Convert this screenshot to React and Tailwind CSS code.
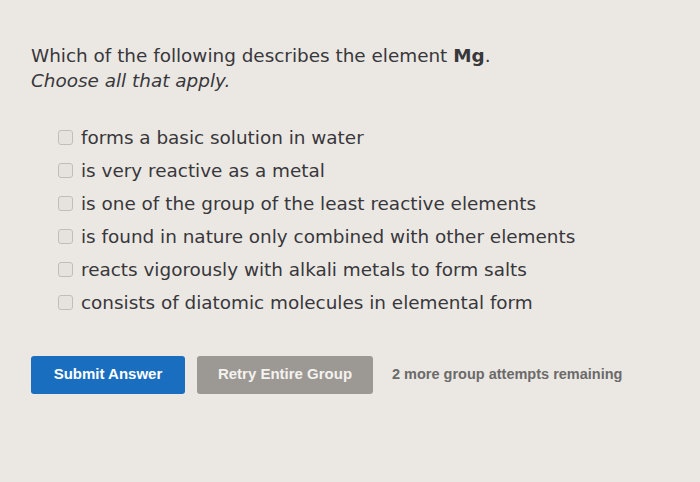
import React from "react";

const options = [
  "forms a basic solution in water",
  "is very reactive as a metal",
  "is one of the group of the least reactive elements",
  "is found in nature only combined with other elements",
  "reacts vigorously with alkali metals to form salts",
  "consists of diatomic molecules in elemental form",
];

export default function App() {
  return (
    <div className="w-[700px] h-[482px] overflow-hidden bg-[#ebe8e3] text-[#38373b] font-['DejaVu_Sans',sans-serif]">
      <div className="pl-[31px] pt-[43px]">
        <p className="text-[18.4px] leading-[25px]">
          Which of the following describes the element <b>Mg</b>.
        </p>
        <p className="text-[18.4px] leading-[25px] italic">Choose all that apply.</p>

        <div className="mt-[32.5px] pl-[27px] flex flex-col gap-[9px]">
          {options.map((o) => (
            <label key={o} className="flex items-center gap-[8px] text-[18.4px] leading-[24px]">
              <span className="w-[15px] h-[15px] rounded-[3px] border-[1.5px] border-[#c2beb7] bg-[#e6e3de] shrink-0" />
              {o}
            </label>
          ))}
        </div>

        <div className="mt-[41px] flex items-center gap-[12px] font-['Liberation_Sans',Arial,sans-serif]">
          <button className="w-[154px] h-[38px] rounded-[3px] bg-[#1a6ec0] text-white font-bold text-[15px]">
            Submit Answer
          </button>
          <button className="w-[176px] h-[38px] rounded-[3px] bg-[#9c9894] text-[#f4f2ef] font-bold text-[15px]">
            Retry Entire Group
          </button>
          <span className="ml-[7px] text-[14.5px] font-bold text-[#6b6a6a]">
            2 more group attempts remaining
          </span>
        </div>
      </div>
    </div>
  );
}
